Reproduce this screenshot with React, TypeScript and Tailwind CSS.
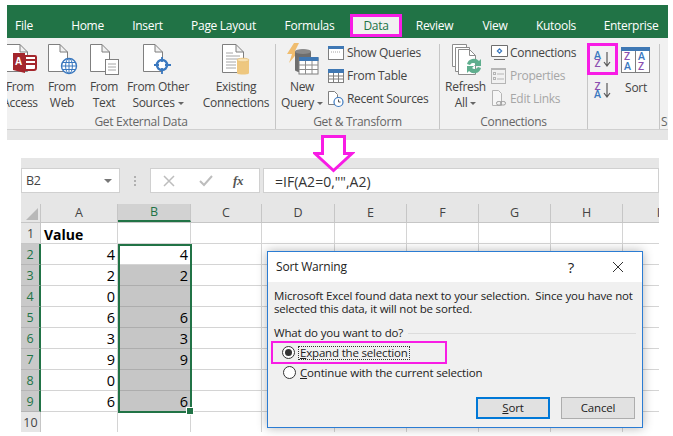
import React from "react";

const Doc = ({ x = 0, y = 0, w = 26, h = 29 }: { x?: number; y?: number; w?: number; h?: number }) => (
  <path
    d={`M${x + 0.5} ${y + 0.5}H${x + w - 8}L${x + w - 0.5} ${y + 8}V${y + h - 0.5}H${x + 0.5}ZM${x + w - 8} ${y + 0.5}V${y + 8}H${x + w - 0.5}`}
    fill="#fff"
    stroke="#7f7f7f"
    strokeWidth="1"
  />
);

const AccessIcon = () => (
  <svg width="32" height="32" viewBox="0 0 32 32" className="ml-[4px]">
    <Doc x={0} y={0} w={22} h={28} />
    <path d="M7 9h12v20l-12-3z" fill="#a4262c" />
    <path d="M19 12h10c1 0 1 1 1 1v11c0 1-1 2-2 2h-9z" fill="#fff" stroke="#a4262c" strokeWidth="2" />
    <path d="M20 16h10M20 20h10" stroke="#a4262c" strokeWidth="2" />
    <text x="9" y="21" fontSize="10" fontWeight="700" fill="#fff" fontFamily="'Liberation Sans',sans-serif">A</text>
  </svg>
);

const WebIcon = () => (
  <svg width="30" height="32" viewBox="0 0 30 32" className="ml-[1px]">
    <Doc w={20} h={28} />
    <circle cx="21" cy="22" r="7.5" fill="#fff" stroke="#3a78bf" strokeWidth="1.4" />
    <ellipse cx="21" cy="22" rx="3.4" ry="7.5" fill="none" stroke="#3a78bf" />
    <path d="M13.5 22h15M14.7 18.5h12.6M14.7 25.500h12.600M21 14.500v15" stroke="#3a78bf" strokeWidth="1" />
  </svg>
);

const TextIcon = () => (
  <svg width="30" height="32" viewBox="0 0 30 32" className="ml-[1px]">
    <Doc w={20} h={28} />
    <rect x="15.500" y="15.500" width="13" height="15" fill="#fff" stroke="#7f7f7f" />
    <path d="M18 20h8M18 23h8M18 26h8" stroke="#a6a6a6" />
  </svg>
);

const OtherIcon = () => (
  <svg width="30" height="32" viewBox="0 0 30 32">
    <Doc w={20} h={28} />
    <circle cx="19" cy="21" r="5" fill="#fff" stroke="#3a78bf" strokeWidth="2.500" />
    <path d="M11 21h5M22 21h6M19 13v5M19 24v6" stroke="#3a78bf" strokeWidth="1.800" />
  </svg>
);

const ExistingIcon = () => (
  <svg width="30" height="32" viewBox="0 0 30 32" className="ml-[2px]">
    <Doc w={22} h={29} />
    <path d="M4 9h7M4 12h14M4 15h14M4 18h10M4 21h10M4 24h10" stroke="#a6a6a6" />
    <path d="M15 16c0-2 12-2 12 0v13c0 2-12 2-12 0z" fill="#eec77f" />
    <ellipse cx="21" cy="16" rx="6" ry="1.800" fill="#f7e2b6" stroke="#e7bd70" strokeWidth="0.700" />
  </svg>
);

const QueryIcon = () => (
  <svg width="34" height="33" viewBox="0 0 34 33" className="-mt-[1px] ml-[1px]">
    <path d="M8 0h5L9 8h4L3 20l3-9H1z" fill="#f0bd6f" />
    <path d="M9 9c0-3 16-3 16 0v18c0 3-16 3-16 0z" fill="#6e6e6e" />
    <ellipse cx="17" cy="8.500" rx="8" ry="2.500" fill="#8a8a8a" />
    <rect x="13" y="15" width="19" height="16" fill="#fff" stroke="#7f7f7f" />
    <rect x="13" y="14" width="19.500" height="4" fill="#3f78b4" />
    <path d="M13 22h19M13 26.500h19M19.500 18v13M26 18v13" stroke="#8c8c8c" />
  </svg>
);

const ShowQ = () => (
  <svg width="16" height="16" viewBox="0 0 16 16">
    <rect x="0.500" y="1.500" width="15" height="13" fill="#fff" stroke="#7f7f7f" />
    <rect x="0" y="1" width="16" height="3" fill="#3f78b4" />
    <path d="M3 7h10" stroke="#a6a6a6" strokeDasharray="1 1" />
  </svg>
);

const TableI = () => (
  <svg width="16" height="16" viewBox="0 0 16 16">
    <rect x="0.500" y="1.500" width="15" height="13" fill="#fff" stroke="#7f7f7f" />
    <rect x="0" y="1" width="16" height="4" fill="#3f78b4" />
    <path d="M0 8h16M0 11h16M5.500 5v10M10.500 5v10" stroke="#7f7f7f" />
  </svg>
);

const RecentI = () => (
  <svg width="16" height="18" viewBox="0 0 16 18">
    <path d="M0.500 1.500h6l3 3v10h-9z" fill="#fff" stroke="#7f7f7f" />
    <circle cx="10.500" cy="12" r="4.500" fill="#fff" stroke="#3a78bf" strokeWidth="1.200" />
    <path d="M10.500 9.500V12h2" fill="none" stroke="#555" />
  </svg>
);

const ConnI = () => (
  <svg width="18" height="16" viewBox="0 0 18 16">
    <path d="M0.500 0.500h16v11h-16zM3 14.500h11" fill="#fff" stroke="#6e6e6e" />
    <path d="M8.500 3l3 3-3 3-3-3z" fill="#3a78bf" />
    <circle cx="8.500" cy="6" r="1" fill="#fff" />
  </svg>
);

const PropI = () => (
  <svg width="15" height="16" viewBox="0 0 15 16">
    <rect x="0.500" y="0.500" width="14" height="15" fill="#f1f1f1" stroke="#b5b5b5" />
    <rect x="0" y="0" width="15" height="2" fill="#b5b5b5" />
    <path d="M6 6h7M6 11h7" stroke="#b5b5b5" />
    <rect x="2.500" y="4.500" width="2" height="2" fill="none" stroke="#b5b5b5" />
    <rect x="2.500" y="9.500" width="2" height="2" fill="none" stroke="#b5b5b5" />
  </svg>
);

const EditI = () => (
  <svg width="16" height="17" viewBox="0 0 16 17">
    <path d="M1.500 0.500h6l3 3v12h-9z" fill="#f6f6f6" stroke="#b5b5b5" />
    <rect x="5.500" y="11.500" width="5" height="3.500" rx="1.700" fill="#f1f1f1" stroke="#a0a0a0" />
    <rect x="9.500" y="11.500" width="5" height="3.500" rx="1.700" fill="none" stroke="#a0a0a0" />
  </svg>
);

const RefreshI = () => (
  <svg width="32" height="33" viewBox="0 0 32 33" className="ml-[5px]">
    <path d="M0.500 0.500h14v22h-14z" fill="#fff" stroke="#8c8c8c" />
    <path d="M3.500 3.500h14v24h-14z" fill="#fff" stroke="#8c8c8c" />
    <path d="M6.500 5.500h11l6 6v19h-17z" fill="#fff" stroke="#8c8c8c" />
    <path d="M17.500 5.500v6h6" fill="none" stroke="#8c8c8c" />
    <path d="M15 20a7 7 0 0 1 12-3l2-2v7h-7l2-2a4 4 0 0 0-6 1z" fill="#5fae8e" />
    <path d="M29 24a7 7 0 0 1-12 3l-2 2v-7h7l-2 2a4 4 0 0 0 6-1z" fill="#5fae8e" />
  </svg>
);

const Arrow = () => (
  <svg width="8" height="15" viewBox="0 0 8 15">
    <path d="M4 0v13M1 10l3 4 3-4" fill="none" stroke="#595959" strokeWidth="1.200" />
  </svg>
);

const Az = ({ first, second, c1, c2 }: { first: string; second: string; c1: string; c2: string }) => (
  <div className="flex flex-col items-center text-[10.500px] leading-[8px] font-semibold tracking-normal">
    <span style={{ color: c1 }}>{first}</span>
    <span style={{ color: c2 }}>{second}</span>
  </div>
);

const SortI = () => (
  <svg width="30" height="26" viewBox="0 0 30 26">
    <rect x="0.500" y="0.500" width="28" height="25" fill="#fff" stroke="#7f7f7f" />
    <rect x="0" y="0" width="29" height="4" fill="#3f78b4" />
    <path d="M14.500 4v21" stroke="#7f7f7f" />
    <text x="3" y="13" fontSize="10.500" fontWeight="600" fill="#8b4fb0" fontFamily="'Open Sans',sans-serif">Z</text>
    <text x="3" y="23" fontSize="10.500" fontWeight="600" fill="#3a78bf" fontFamily="'Open Sans',sans-serif">A</text>
    <text x="17" y="13" fontSize="10.500" fontWeight="600" fill="#3a78bf" fontFamily="'Open Sans',sans-serif">A</text>
    <text x="17" y="23" fontSize="10.500" fontWeight="600" fill="#8b4fb0" fontFamily="'Open Sans',sans-serif">Z</text>
  </svg>
);

const tabs = [
  { label: "File", ml: 8, w: 18 },
  { label: "Home", ml: 38, w: 33 },
  { label: "Insert", ml: 29, w: 29 },
  { label: "Page Layout", ml: 29, w: 65 },
  { label: "Formulas", ml: 29, w: 49 },
];
const tabs2 = [
  { label: "Review", ml: 14, w: 37 },
  { label: "View", ml: 29, w: 26 },
  { label: "Kutools", ml: 28, w: 40 },
  { label: "Enterprise", ml: 29, w: 52 },
];

const Tab = ({ label, ml, w }: { label: string; ml: number; w: number }) => (
  <div style={{ marginLeft: ml, width: w }} className="flex justify-center whitespace-nowrap text-white">
    {label}
  </div>
);

const Big = ({ w, a, b, icon, caret }: { w: string; a: string; b: string; icon: React.ReactNode; caret?: boolean }) => (
  <div className={`${w} shrink-0 flex flex-col items-center`}>
    <div className="h-[35px] flex items-start justify-center">{icon}</div>
    <div className="whitespace-nowrap leading-[16px] text-center">{a}</div>
    <div className="whitespace-nowrap leading-[16px] text-center flex items-center gap-[3px]">
      {b}
      {caret && <span className="inline-block border-x-[3px] border-t-[3px] border-x-transparent border-t-[#666] mt-[1px]" />}
    </div>
  </div>
);

const Small = ({ icon, label, off }: { icon: React.ReactNode; label: string; off?: boolean }) => (
  <div className={`h-[23px] flex items-center whitespace-nowrap ${off ? "text-[#a6a6a6]" : ""}`}>
    <div className="w-[19px] flex items-center">{icon}</div>
    <span>{label}</span>
  </div>
);

const Group = ({ w, label, children, line = true }: { w: string; label: string; children: React.ReactNode; line?: boolean }) => (
  <div className={`${w} shrink-0 h-[85px] flex flex-col ${line ? "border-r border-[#c6c6c6]" : ""}`}>
    <div className="h-[71px] flex">{children}</div>
    <div className="text-center whitespace-nowrap leading-[14px] text-[#666]">{label}</div>
  </div>
);

const cols = [
  { l: "A", w: "w-[77px]" },
  { l: "B", w: "w-[73px]" },
  { l: "C", w: "w-[71px]" },
  { l: "D", w: "w-[73px]" },
  { l: "E", w: "w-[72px]" },
  { l: "F", w: "w-[72px]" },
  { l: "G", w: "w-[72px]" },
  { l: "H", w: "w-[72px]" },
  { l: "I", w: "w-[72px]" },
];

const rows: [string, string][] = [
  ["4", "4"],
  ["2", "2"],
  ["0", ""],
  ["6", "6"],
  ["3", "3"],
  ["9", "9"],
  ["0", ""],
  ["6", "6"],
];

const Radio = ({ on }: { on?: boolean }) => (
  <span className="w-[13px] h-[13px] rounded-full border border-[#333] bg-white flex items-center justify-center shrink-0">
    {on && <span className="w-[7px] h-[7px] rounded-full bg-[#333]" />}
  </span>
);

export default function App() {
  return (
    <div className="relative w-[673px] h-[436px] overflow-hidden bg-white text-[12px] tracking-[-0.3px] text-[#444] font-['Open_Sans',sans-serif]">
      <div className="pt-[5px] pl-[7px] w-[668px]">
        <div className="bg-[#217346] h-[33px] pt-[9px] pb-[1px] flex items-center">
          {tabs.map((t) => (
            <Tab key={t.label} {...t} />
          ))}
          <div className="ml-[16px] w-[52px] h-[23px] bg-[#f1f1f1] border-[3px] border-[#f81ce5] flex items-center justify-center text-[#217346]">
            Data
          </div>
          {tabs2.map((t) => (
            <Tab key={t.label} {...t} />
          ))}
        </div>
        <div className="bg-[#f1f1f1] h-[92px] pt-[6px] overflow-hidden flex border-b border-[#d0d0d0]">
          <Group w="w-[269px]" label="Get External Data">
            <div className="-ml-[8px]" />
            <Big w="w-[42px]" a="From" b="Access" icon={<AccessIcon />} />
            <Big w="w-[42px]" a="From" b="Web" icon={<WebIcon />} />
            <Big w="w-[42px]" a="From" b="Text" icon={<TextIcon />} />
            <Big w="w-[66px]" a="From Other" b="Sources" caret icon={<OtherIcon />} />
            <div className="w-[1px] h-[58px] bg-[#dcdcdc] mx-[3px]" />
            <Big w="w-[78px]" a="Existing" b="Connections" icon={<ExistingIcon />} />
          </Group>
          <Group w="w-[164px]" label="Get & Transform">
            <Big w="w-[52px]" a="New" b="Query" caret icon={<QueryIcon />} />
            <div className="-mt-[3px]">
              <Small icon={<ShowQ />} label="Show Queries" />
              <Small icon={<TableI />} label="From Table" />
              <Small icon={<RecentI />} label="Recent Sources" />
            </div>
          </Group>
          <Group w="w-[148px]" label="Connections">
            <Big w="w-[51px]" a="Refresh" b="All" caret icon={<RefreshI />} />
            <div className="-mt-[3px]">
              <Small icon={<ConnI />} label="Connections" />
              <Small icon={<PropI />} label="Properties" off />
              <Small icon={<EditI />} label="Edit Links" off />
            </div>
          </Group>
          <Group w="w-[72px]" label="">
            <div className="w-[31px] flex flex-col items-center -ml-[1px]">
              <div className="w-[31px] h-[32px] -mt-[1px] border-[3px] border-[#f81ce5] flex items-center justify-center gap-[2px]">
                <Az first="A" second="Z" c1="#3a78bf" c2="#8b4fb0" />
                <Arrow />
              </div>
              <div className="mt-[7px] flex items-center gap-[2px]">
                <Az first="Z" second="A" c1="#8b4fb0" c2="#3a78bf" />
                <Arrow />
              </div>
            </div>
            <div className="ml-[1px] w-[34px] flex flex-col items-center pt-[3px]">
              <SortI />
              <div className="mt-[7px] leading-[16px]">Sort</div>
            </div>
          </Group>
          <div className="pl-[1px] pt-[71px] leading-[14px] text-[#666]">S</div>
        </div>
        <div className="h-[10px] bg-[#e6e6e6]" />
      </div>

      <div className="ml-[21px] mt-[18px] w-[638px] overflow-hidden">
        <div className="h-[46px] bg-[#e6e6e6] pt-[10px] flex items-start text-[#444]">
          <div className="w-[99px] h-[25px] bg-white border border-[#d0d0d0] flex items-center justify-between pl-[4px] pr-[7px]">
            <span className="text-[12.500px] pt-[1px]">B2</span>
            <span className="border-x-[4px] border-t-[4px] border-x-transparent border-t-[#777]" />
          </div>
          <div className="w-[30px] h-[25px] flex flex-col items-center justify-center gap-[2px]">
            <span className="w-[2px] h-[2px] bg-[#b0b0b0]" />
            <span className="w-[2px] h-[2px] bg-[#b0b0b0]" />
            <span className="w-[2px] h-[2px] bg-[#b0b0b0]" />
          </div>
          <div className="w-[110px] h-[25px] bg-white border border-[#d0d0d0] flex items-center">
            <svg width="12" height="12" viewBox="0 0 12 12" className="ml-[12px]">
              <path d="M1 1l10 10M11 1L1 11" stroke="#bdbdbd" strokeWidth="1.500" />
            </svg>
            <svg width="14" height="12" viewBox="0 0 14 12" className="ml-[24px]">
              <path d="M1 6l4 4 8-9" fill="none" stroke="#bdbdbd" strokeWidth="2" />
            </svg>
            <span className="ml-[20px] italic font-['Liberation_Serif',serif] font-bold text-[13px] text-[#555]">fx</span>
          </div>
          <div className="ml-[3px] w-[396px] h-[25px] bg-white border border-[#d0d0d0] flex items-center pl-[11px] pt-[1px] text-[14px] tracking-normal text-[#333] whitespace-nowrap">
            =IF(A2=0,"",A2)
          </div>
        </div>

        <div className="relative w-[700px] text-[14.500px] tracking-normal text-black">
          <div className="flex h-[19px] bg-[#e6e6e6] border-b border-[#c6c6c6] text-[12.500px] text-[#444]">
            <div className="w-[20px] border-r border-[#c6c6c6] flex items-end justify-end pr-[2px] pb-[2px]">
              <span className="border-l-[12px] border-b-[12px] border-l-transparent border-b-[#b8b8b8]" />
            </div>
            {cols.map((c) => (
              <div
                key={c.l}
                className={`${c.w} shrink-0 border-r border-[#c6c6c6] flex items-center justify-center pt-[1px] ${c.l === "B" ? "bg-[#d2d2d2] border-b-2 border-b-[#217346] text-[#217346]" : ""}`}
              >
                {c.l}
              </div>
            ))}
          </div>
          <div className="flex h-[21px]">
            <div className="w-[20px] bg-[#e6e6e6] border-r border-b border-[#c6c6c6] text-[12.500px] text-[#444] flex items-center justify-center pt-[3px]">1</div>
            {cols.map((c) => (
              <div key={c.l} className={`${c.w} shrink-0 border-r border-b border-[#d4d4d4] pl-[3px] pt-[3px] flex items-center font-bold text-[14px] leading-none`}>
                {c.l === "A" ? "Value" : ""}
              </div>
            ))}
          </div>
          {rows.map(([a, b], i) => (
            <div key={i} className="flex h-[21px]">
              <div className="w-[20px] bg-[#c9c9c9] border-r-2 border-r-[#217346] border-b border-b-[#b5b5b5] text-[12.500px] text-[#217346] flex items-center justify-center pt-[3px]">
                {i + 2}
              </div>
              {cols.map((c) => (
                <div
                  key={c.l}
                  className={`${c.w} shrink-0 border-r border-b flex items-center justify-end pr-[2px] pt-[3px] leading-none ${
                    c.l === "B" && i > 0 ? "bg-[#c6c6c6] border-[#adadad]" : "border-[#d4d4d4]"
                  }`}
                >
                  {c.l === "A" ? a : c.l === "B" ? b : ""}
                </div>
              ))}
            </div>
          ))}
          <div className="flex h-[20px]">
            <div className="w-[20px] bg-[#e6e6e6] border-r border-[#c6c6c6] text-[12.500px] text-[#444] flex items-center justify-center pt-[3px]">10</div>
            {cols.map((c) => (
              <div key={c.l} className={`${c.w} shrink-0 border-r border-[#d4d4d4]`} />
            ))}
          </div>
          <div className="absolute left-[97px] top-[40px] w-[74px] h-[169px] border-2 border-[#217346] pointer-events-none">
            <div className="absolute -right-[4px] -bottom-[4px] w-[6px] h-[6px] bg-[#217346] border border-white box-content" />
          </div>
        </div>
      </div>

      <svg width="42" height="40" viewBox="0 0 42 40" className="absolute left-[313px] top-[134px]">
        <path d="M9.500 2.500h22v17h7.500L20.500 36.500 2 19.500h7.500z" fill="#fff" stroke="#f81ce5" strokeWidth="3" />
      </svg>

      <div className="absolute left-[267px] top-[251px] w-[376px] h-[177px] bg-[#f0f0f0] border border-[#2b7cd3] shadow-[0_0_10px_rgba(0,0,0,0.3)] text-[11.500px] tracking-[-0.18px] text-[#222]">
        <div className="h-[30px] bg-white flex items-center pl-[8px] text-[12px]">
          <span>Sort Warning</span>
          <span className="ml-auto mr-[38px] text-[15px]">?</span>
          <svg width="12" height="12" viewBox="0 0 12 12" className="mr-[18px]">
            <path d="M1 1l10 10M11 1L1 11" stroke="#333" strokeWidth="1" />
          </svg>
        </div>
        <div className="px-[6px] pt-[7px] leading-[13px] whitespace-nowrap">
          <div>Microsoft Excel found data next to your selection.&nbsp; Since you have not</div>
          <div>selected this data, it will not be sorted.</div>
        </div>
        <div className="flex items-center pl-[6px] pr-[6px] mt-[11px] leading-[14px]">
          <span className="whitespace-nowrap">What do you want to do?</span>
          <span className="ml-[5px] flex-1 h-[1px] bg-[#dcdcdc]" />
        </div>
        <div className="relative ml-[3px] mt-[1px] w-[176px] h-[23px] border-[2.500px] border-[#f81ce5] flex items-center pl-[9px]">
          <Radio on />
          <span className="ml-[3px] border border-dotted border-[#333] leading-[12px] px-[1px] whitespace-nowrap">
            <u>E</u>xpand the selection
          </span>
        </div>
        <div className="ml-[15px] mt-[1px] h-[15px] flex items-center whitespace-nowrap">
          <Radio />
          <span className="ml-[4px]">
            <u>C</u>ontinue with the current selection
          </span>
        </div>
        <div className="flex justify-end gap-[11px] pr-[7px] mt-[17px]">
          <div className="w-[74px] h-[22px] bg-[#e1e1e1] border-2 border-[#0078d7] flex items-center justify-center">
            <span><u>S</u>ort</span>
          </div>
          <div className="w-[74px] h-[22px] bg-[#e1e1e1] border border-[#adadad] flex items-center justify-center">Cancel</div>
        </div>
      </div>
    </div>
  );
}
